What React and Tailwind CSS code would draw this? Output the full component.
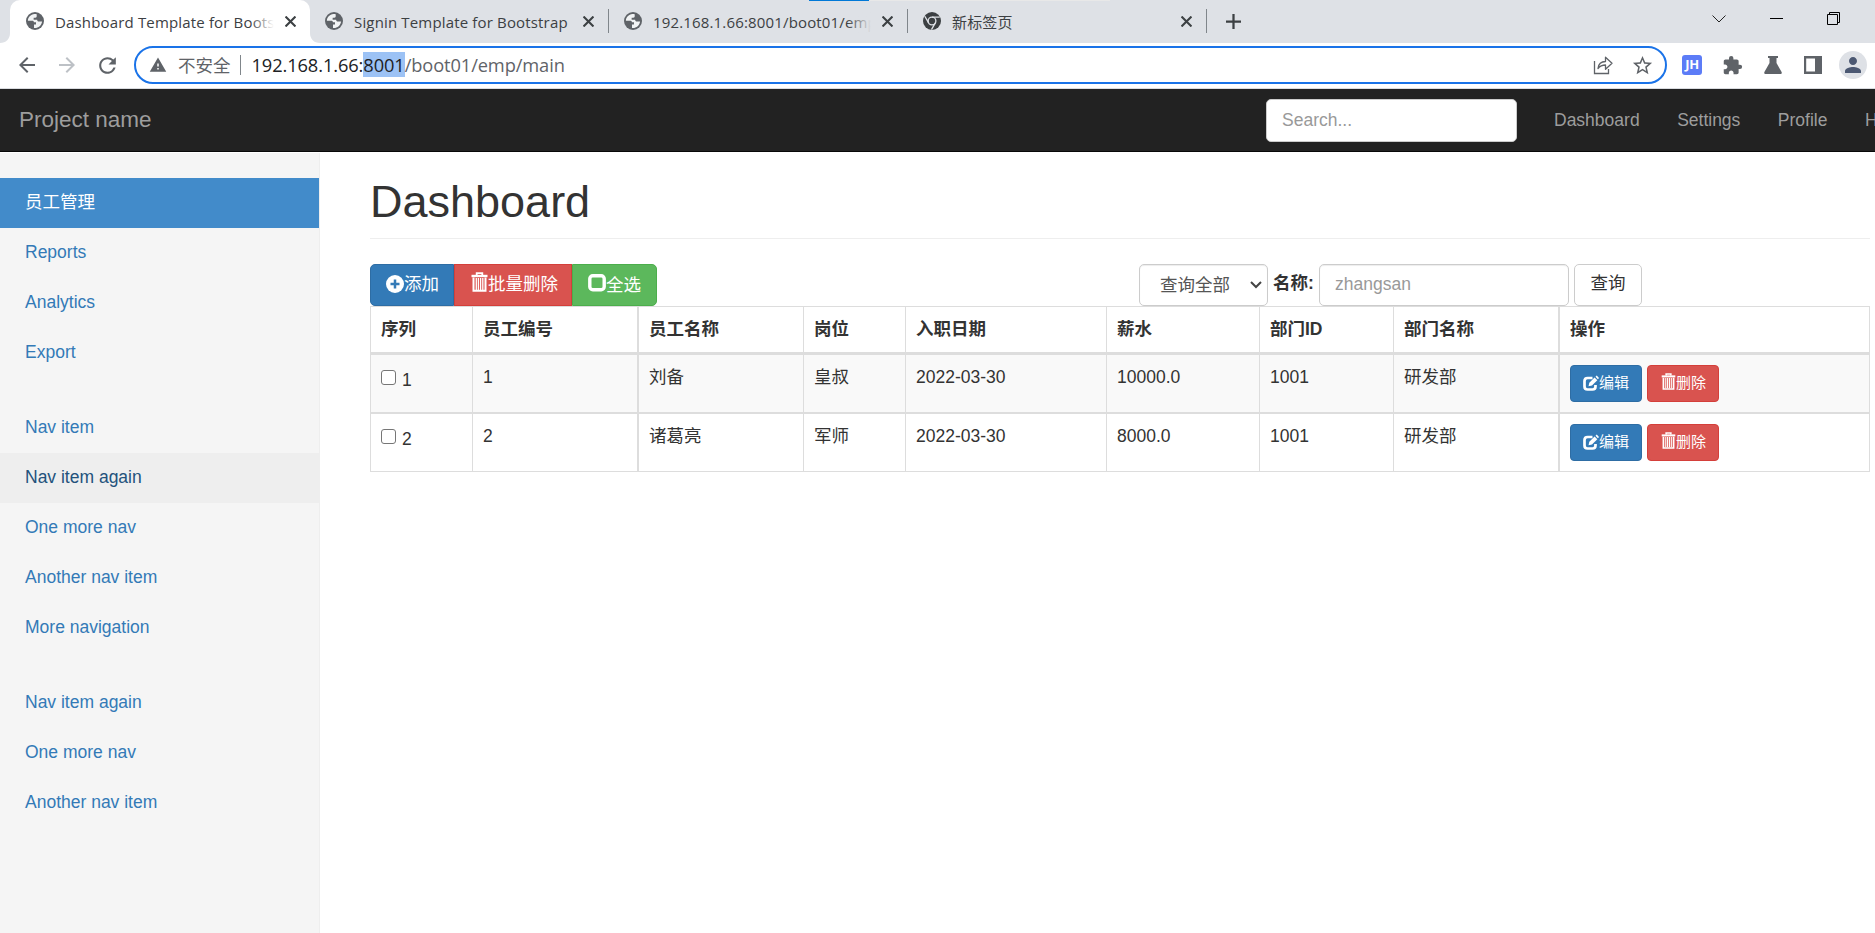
import React from 'react';
import { MdArrowBack, MdArrowForward, MdRefresh, MdStarOutline, MdExtension, MdPerson, MdWarning } from 'react-icons/md';

const employees = [
  { id: 1, name: '刘备', job: '皇叔', date: '2022-03-30', salary: '10000.0', deptId: '1001', dept: '研发部' },
  { id: 2, name: '诸葛亮', job: '军师', date: '2022-03-30', salary: '8000.0', deptId: '1001', dept: '研发部' },
];

const columns = [
  { label: '序列', width: 'w-[102px]', border: 'border-l' },
  { label: '员工编号', width: 'w-[165px]', border: 'border-l' },
  { label: '员工名称', width: 'w-[166px]', border: 'border-l-2' },
  { label: '岗位', width: 'w-[102px]', border: 'border-l' },
  { label: '入职日期', width: 'w-[201px]', border: 'border-l' },
  { label: '薪水', width: 'w-[153px]', border: 'border-l' },
  { label: '部门ID', width: 'w-[134px]', border: 'border-l' },
  { label: '部门名称', width: 'w-[165px]', border: 'border-l' },
  { label: '操作', width: 'w-[312px]', border: 'border-l-2 border-r' },
];

const navGroups = [
  ['员工管理', 'Reports', 'Analytics', 'Export'],
  ['Nav item', 'Nav item again', 'One more nav', 'Another nav item', 'More navigation'],
  ['Nav item again', 'One more nav', 'Another nav item'],
];

const GlobeIcon = () => (
  <svg viewBox="0 0 20 20" className="size-[18px] shrink-0">
    <circle cx="10" cy="10" r="10" fill="#5f6368" />
    <path d="M9.500 2.200C5 2.600 2.200 6 2.100 9.600h4.700c1.500 0 2 .6 2 1.900h2.300v2.300H8.900v3.900c4.500.5 8.500-2.700 9-7.200h-3.600c-1.300 0-1.900-.8-1.900-2H8.500V6.300h1.800c1.200 0 1.600-.7 1.600-1.800V2.600c-.8-.3-1.600-.4-2.400-.4z" fill="#f1f3f4" />
  </svg>
);

const ChromeIcon = () => (
  <svg viewBox="0 0 20 20" className="size-[18px] shrink-0">
    <circle cx="10" cy="10" r="10" fill="#3c4043" />
    <circle cx="10" cy="10" r="4.300" fill="none" stroke="#dee1e6" strokeWidth="1.500" />
    <path d="M10 5.700h8.600M6.300 12.100 2 4.700M13.700 12.100 9.400 19.500" stroke="#dee1e6" strokeWidth="1.500" />
  </svg>
);

const CloseIcon = () => (
  <svg viewBox="0 0 10 10" className="ml-[11px] size-[11px] shrink-0" stroke="#3c4043" strokeWidth="1.900"><path d="m.5.5 9 9M9.500.5l-9 9" /></svg>
);

const PlusCircleIcon = () => (
  <svg viewBox="0 0 18 18" className="size-[18px] shrink-0">
    <circle cx="9" cy="9" r="9" fill="#fff" />
    <path d="M9 4.500v9M4.500 9h9" stroke="#337ab7" strokeWidth="2.500" />
  </svg>
);

const TrashIcon = ({ className }) => (
  <svg viewBox="0 0 16 20" className={className} fill="none" stroke="currentColor">
    <path d="M5.200 3V1.200h5.600V3" strokeWidth="1.800" />
    <path d="M0 4h16" strokeWidth="2.400" />
    <path d="M2 5.500V18.800h12V5.500" strokeWidth="2" />
    <path d="M4.800 6v12M6.900 6v12M9.100 6v12M11.300 6v12" strokeWidth="1.300" />
  </svg>
);

const UncheckedIcon = () => (
  <svg viewBox="0 0 18 18" className="size-[18px] shrink-0">
    <rect x="1.800" y="1.800" width="14.400" height="14" rx="3" fill="none" stroke="#fff" strokeWidth="3.400" />
  </svg>
);

const EditIcon = () => (
  <svg viewBox="0 0 16 16" className="size-4 shrink-0" fill="none">
    <path d="M9.500 3H4.600C2.600 3 1.500 4 1.500 6v5.500c0 2 1 3 3 3h5c2 0 3-1 3-3V10" stroke="#fff" strokeWidth="2.700" />
    <path d="m5.500 11.200.8-3.400 5.300-5.300 2.700 2.700L9 10.500z" fill="#fff" />
    <path d="m12.500 1.700 1.200-1.200L16 2.900l-1.100 1.300z" fill="#fff" />
  </svg>
);

const Tab = ({ title, icon, active, fade, width }) => (
  <div className={`relative flex h-[43px] items-center pb-px pr-[14px] ${width} ${active ? 'rounded-t-[10px] bg-white pl-4' : 'pl-[15px]'}`}>
    {icon}
    <span className="relative ml-[11px] flex-1 overflow-hidden whitespace-nowrap pt-px text-[15px] leading-6 tracking-[0.16px] text-[#3c4043]">
      {title}
      {fade && <span className={`absolute inset-y-0 right-0 w-6 bg-linear-to-r from-transparent ${active ? 'to-white' : 'to-[#dee1e6]'}`} />}
    </span>
    <CloseIcon />
    {active && (
      <>
        <svg viewBox="0 0 10 10" className="absolute -left-[10px] bottom-0 size-[10px]" fill="#fff"><path d="M10 0v10H0C6 10 10 6 10 0z" /></svg>
        <svg viewBox="0 0 10 10" className="absolute -right-[10px] bottom-0 size-[10px]" fill="#fff"><path d="M0 0v10h10C4 10 0 6 0 0z" /></svg>
      </>
    )}
  </div>
);

const TabDivider = () => <div className="mb-px h-6 w-px bg-[#80868b]" />;

const BrowserChrome = () => (
  <header className="font-['Open_Sans','Noto_Sans_CJK_SC',sans-serif]">
    <div className="relative flex h-[43px] items-center bg-[#dee1e6] pl-[10px]">
      <div className="absolute left-[809px] top-0 h-px w-[60px] bg-[#0078d7]" />
      <div className="absolute left-[869px] top-0 h-px w-[241px] bg-[#e8e8e8]" />
      <Tab title="Dashboard Template for Bootstrap" icon={<GlobeIcon />} active fade width="w-[300px]" />
      <Tab title="Signin Template for Bootstrap" icon={<GlobeIcon />} width="w-[298px]" />
      <TabDivider />
      <Tab title="192.168.1.66:8001/boot01/emp/main" icon={<GlobeIcon />} fade width="w-[298px]" />
      <TabDivider />
      <Tab title="新标签页" icon={<ChromeIcon />} width="w-[298px]" />
      <TabDivider />
      <svg viewBox="0 0 16 16" className="ml-[19px] size-[15px]" stroke="#3c4043" strokeWidth="2.400"><path d="M8 0v16M0 8h16" /></svg>
      <div className="ml-auto mb-1.5 flex items-center gap-[44px] pr-[35px]">
        <svg viewBox="0 0 14 8" className="h-2 w-[14px]" fill="none" stroke="#222"><path d="m.5.5 6.500 6.500L13.500.5" /></svg>
        <svg viewBox="0 0 13 13" className="size-[13px]" stroke="#000"><path d="M0 6.500h13" /></svg>
        <svg viewBox="0 0 13 13" className="size-[13px]" fill="none" stroke="#000"><path d="M.5 2.500h10v10H.5zM2.500 2.500v-2h10v10h-2" /></svg>
      </div>
    </div>
    <div className="flex h-[46px] items-center border-b border-[#dadce0] bg-white pb-px text-[#5f6368]">
      <MdArrowBack className="ml-[15px] size-6" />
      <MdArrowForward className="ml-4 size-6 text-[#bdc1c6]" />
      <MdRefresh className="ml-[16px] size-[25px]" />
      <div className="ml-[14px] flex h-[38px] w-[1533px] items-center rounded-full border-[2.500px] border-[#1a73e8] pl-[13px] pr-[11px] text-[18.250px]">
        <MdWarning className="size-[18px]" />
        <span className="ml-[11px] text-[17.500px]">不安全</span>
        <span className="ml-[9px] mr-[11px] h-5 w-px bg-[#80868b]" />
        <span className="pb-px tracking-[-0.1px]">
          <span className="text-[#202124]">192.168.1.66:</span>
          <span className="inline-block h-[25px] bg-[#9cc2f5] leading-[25px] text-[#202124]">8001</span>
          /boot01/emp/main
        </span>
        <svg viewBox="0 0 20 20" className="ml-auto size-5" fill="none" stroke="#5f6368" strokeWidth="1.300">
          <path d="M1.500 6v12.500h14V14" />
          <path d="M5 13.500c.5-4.500 3-7 7.500-7V2.200l6.500 6-6.500 6V10c-3.500 0-5.500 1-7.500 3.500z" strokeLinejoin="round" />
        </svg>
        <MdStarOutline className="ml-[18px] size-[23px]" />
      </div>
      <div className="ml-[15px] flex h-5 w-5 items-center justify-center rounded-[3px] bg-[#5c7cf7] text-[13px] font-bold tracking-[-0.5px] text-white">JH</div>
      <MdExtension className="ml-5 size-[21px]" />
      <svg viewBox="0 0 18 18" className="ml-[21px] size-[18px]" fill="currentColor"><path d="M4 0h10v2h-1.500v5L17.600 16c.5 1 0 2-1.200 2H1.600C.4 18 0 17 .4 16L5.500 7V2H4z" /></svg>
      <svg viewBox="0 0 18 18" className="ml-[22px] size-[18px]" fill="currentColor"><path d="M0 0h18v18H0zM2.200 2.500v13H11v-13z" fillRule="evenodd" /></svg>
      <div className="ml-[17px] flex size-7 items-center justify-center rounded-full bg-[#dee1e6] text-[#4b5872]"><MdPerson className="size-6" /></div>
    </div>
  </header>
);

const Navbar = () => (
  <nav className="flex h-[63px] items-center overflow-hidden whitespace-nowrap border-b border-[#080808] bg-[#222] pl-[19px] text-[#9d9d9d]">
    <span className="pb-px text-[22.500px] leading-[25px]">Project name</span>
    <div className="ml-auto flex h-[43px] w-[251px] shrink-0 items-center rounded-[5px] border border-[#ccc] bg-white px-[15px] text-[#999]">Search...</div>
    <div className="ml-[37px] flex w-[321px] shrink-0 gap-[37.500px]">
      <span>Dashboard</span>
      <span>Settings</span>
      <span>Profile</span>
      <span>Help</span>
    </div>
  </nav>
);

const Sidebar = () => (
  <aside className="flex w-80 shrink-0 flex-col gap-[25px] border-r border-[#eee] bg-[#f5f5f5] pt-[25px]">
    {navGroups.map((group, g) => (
      <ul key={g}>
        {group.map((item, i) => {
          let state = 'text-[#337ab7]';
          if (g === 0 && i === 0) state = 'bg-[#428bca] text-white';
          if (g === 1 && i === 1) state = 'bg-[#eee] text-[#23527c]';
          return <li key={item} className={`h-[50px] px-[25px] py-[12px] ${state}`}>{item}</li>;
        })}
      </ul>
    ))}
  </aside>
);

const Toolbar = () => (
  <div className="flex h-[42px] items-stretch">
    <div className="flex text-white">
      <button className="flex w-[84px] items-center rounded-l-[5px] border border-[#2e6da4] bg-[#337ab7] pb-0.5 pl-[15px]"><PlusCircleIcon />添加</button>
      <button className="flex w-[118px] items-center border border-[#d43f3a] bg-[#d9534f] pb-0.5 pl-4"><TrashIcon className="mb-1 h-5 w-[17px] shrink-0" />批量删除</button>
      <button className="flex w-[85px] items-center rounded-r-[5px] border border-[#4cae4c] bg-[#5cb85c] pl-[15px]"><span className="mb-1"><UncheckedIcon /></span>全选</button>
    </div>
    <div className="ml-[482px] flex items-center">
      <div className="flex h-full w-[129px] items-center justify-between rounded-[5px] border border-[#ccc] pl-5 pr-[5px] text-[#555] shadow-[inset_0_1px_1px_rgba(0,0,0,.075)]">
        查询全部
        <svg viewBox="0 0 12 8" className="h-2 w-3" fill="none" stroke="#444" strokeWidth="2"><path d="m1 1 5 5 5-5" /></svg>
      </div>
      <label className="ml-[5px] w-[46px] pb-1 font-bold">名称:</label>
      <div className="flex h-full w-[250px] items-center rounded-[5px] border border-[#ccc] px-[15px] pb-0.5 text-[#999] shadow-[inset_0_1px_1px_rgba(0,0,0,.075)]">zhangsan</div>
      <button className="ml-[5px] h-full w-[68px] rounded-[5px] border border-[#ccc] pb-[3px]">查询</button>
    </div>
  </div>
);

const EmployeeTable = () => (
  <table className="w-[1500px] table-fixed border-separate border-spacing-0 text-left">
    <thead>
      <tr className="h-[49px]">
        {columns.map((c) => (
          <th key={c.label} className={`border-t border-b-[3px] border-[#ddd] px-[10px] pt-[10px] align-top font-bold ${c.width} ${c.border}`}>{c.label}</th>
        ))}
      </tr>
    </thead>
    <tbody>
      {employees.map((e, row) => {
        const cell = `border-[#ddd] px-[10px] pt-[10px] align-top ${row === 0 ? 'border-b-2 bg-[#f9f9f9]' : 'border-b'}`;
        return (
          <tr key={e.id} className={row === 0 ? 'h-[59px]' : 'h-[58px]'}>
            <td className={`border-l ${cell}`}>
              <div className="flex items-start pt-[3px]">
                <span className="mt-0.5 size-[15px] rounded-[3px] border border-[#767676] bg-white" />
                <span className="ml-1.5">{e.id}</span>
              </div>
            </td>
            <td className={`border-l ${cell}`}>{e.id}</td>
            <td className={`border-l-2 ${cell}`}>{e.name}</td>
            <td className={`border-l ${cell}`}>{e.job}</td>
            <td className={`border-l ${cell}`}>{e.date}</td>
            <td className={`border-l ${cell}`}>{e.salary}</td>
            <td className={`border-l ${cell}`}>{e.deptId}</td>
            <td className={`border-l ${cell}`}>{e.dept}</td>
            <td className={`border-l-2 border-r ${cell}`}>
              <div className="flex gap-[5px] text-[15px] text-white">
                <button className="flex h-[37px] w-[72px] items-center rounded-[4px] border border-[#2e6da4] bg-[#337ab7] pb-0.5 pl-[12px]"><EditIcon />编辑</button>
                <button className="flex h-[37px] w-[72px] items-center rounded-[4px] border border-[#d43f3a] bg-[#d9534f] pb-0.5 pl-[13px]"><TrashIcon className="mb-0.5 h-[17px] w-[15px] shrink-0" />删除</button>
              </div>
            </td>
          </tr>
        );
      })}
    </tbody>
  </table>
);

export default function App() {
  return (
    <div className="flex h-[933px] w-[1875px] flex-col overflow-hidden bg-white">
      <BrowserChrome />
      <div className="flex flex-1 flex-col font-['Liberation_Sans','Noto_Sans_CJK_SC',sans-serif] text-[17.500px] leading-[25px] text-[#333]">
        <Navbar />
        <div className="mt-px flex flex-1">
          <Sidebar />
          <main className="pl-[50px] pt-[24px]">
            <h1 className="mb-[25px] h-[62px] w-[1500px] border-b border-[#eee] text-[45px] leading-[49px]">Dashboard</h1>
            <Toolbar />
            <EmployeeTable />
          </main>
        </div>
      </div>
    </div>
  );
}
